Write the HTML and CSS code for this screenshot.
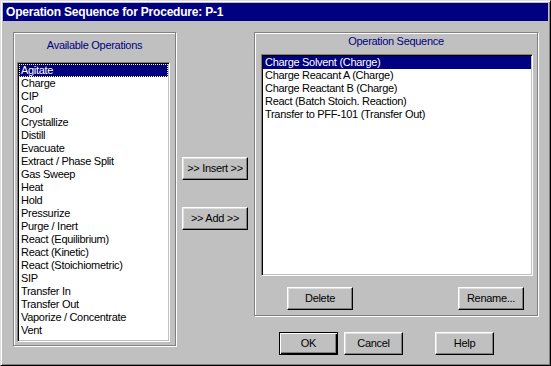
FILE: index.html
```html
<!DOCTYPE html>
<html>
<head>
<meta charset="utf-8">
<link rel="stylesheet" href="styles.css">
</head>
<body>
<div class="window">
  <div class="titlebar">Operation Sequence for Procedure: P-1</div>
  <div class="content">
    <div class="group group-left">
      <div class="group-label label-left">Available Operations</div>
      <div class="listbox list-left">
        <div class="item selected focused">Agitate</div>
        <div class="item">Charge</div>
        <div class="item">CIP</div>
        <div class="item">Cool</div>
        <div class="item">Crystallize</div>
        <div class="item">Distill</div>
        <div class="item">Evacuate</div>
        <div class="item">Extract / Phase Split</div>
        <div class="item">Gas Sweep</div>
        <div class="item">Heat</div>
        <div class="item">Hold</div>
        <div class="item">Pressurize</div>
        <div class="item">Purge / Inert</div>
        <div class="item">React (Equilibrium)</div>
        <div class="item">React (Kinetic)</div>
        <div class="item">React (Stoichiometric)</div>
        <div class="item">SIP</div>
        <div class="item">Transfer In</div>
        <div class="item">Transfer Out</div>
        <div class="item">Vaporize / Concentrate</div>
        <div class="item">Vent</div>
      </div>
    </div>
    <div class="mid">
      <button class="btn btn-mid btn-insert">&gt;&gt; Insert &gt;&gt;</button>
      <button class="btn btn-mid btn-add">&gt;&gt; Add &gt;&gt;</button>
    </div>
    <div class="right">
      <div class="group group-right">
        <div class="group-label label-right">Operation Sequence</div>
        <div class="listbox list-right">
          <div class="item selected">Charge Solvent (Charge)</div>
          <div class="item">Charge Reacant A (Charge)</div>
          <div class="item">Charge Reactant B (Charge)</div>
          <div class="item">React (Batch Stoich. Reaction)</div>
          <div class="item">Transfer to PFF-101 (Transfer Out)</div>
        </div>
        <div class="seq-buttons">
          <button class="btn btn-seq">Delete</button>
          <button class="btn btn-seq">Rename...</button>
        </div>
      </div>
      <div class="dialog-buttons">
        <button class="btn btn-dlg btn-default">OK</button>
        <button class="btn btn-dlg btn-cancel">Cancel</button>
        <button class="btn btn-dlg btn-help">Help</button>
      </div>
    </div>
  </div>
</div>
</body>
</html>
```
FILE: styles.css
```css
html, body {
  margin: 0;
  padding: 0;
  background: #c0c0c0;
}
body {
  font-family: "Liberation Sans", Arial, sans-serif;
  font-size: 11px;
  letter-spacing: -0.3px;
  color: #000;
}
.window {
  box-sizing: border-box;
  width: 551px;
  height: 366px;
  background: #c0c0c0;
  border: 1px solid;
  border-color: #dfdfdf #000 #000 #dfdfdf;
  box-shadow: inset 1px 1px 0 #fff, inset -1px -1px 0 #808080;
  padding: 2px;
  display: flex;
  flex-direction: column;
}
.titlebar {
  height: 18px;
  line-height: 18px;
  background: #000080;
  color: #fff;
  font-weight: bold;
  font-size: 12px;
  letter-spacing: -0.2px;
  padding-left: 3px;
  white-space: nowrap;
}
.content {
  display: flex;
  align-items: flex-start;
  padding: 11px 0 0 10px;
}
.group {
  box-sizing: border-box;
  border: 1px solid #808080;
  box-shadow: 1px 1px 0 #fff, inset 1px 1px 0 #fff;
  display: flex;
  flex-direction: column;
}
.group-label {
  color: #000080;
  text-align: center;
  line-height: 13px;
  white-space: nowrap;
}
.group-left {
  width: 163px;
  height: 314px;
}
.label-left {
  padding-top: 6px;
}
.listbox {
  box-sizing: border-box;
  background: #fff;
  border: 1px solid;
  border-color: #808080 #fff #fff #808080;
  box-shadow: inset 1px 1px 0 #000, inset -1px -1px 0 #c0c0c0;
  padding: 1px;
  overflow: hidden;
}
.list-left {
  width: 153px;
  height: 280px;
  margin: 10px 0 0 3px;
}
.item {
  box-sizing: border-box;
  height: 13px;
  line-height: 13px;
  padding-left: 2px;
  white-space: nowrap;
}
.item.selected {
  background: #000080;
  color: #fff;
}
.item.focused {
  border: 1px dotted #ffffa0;
  padding-left: 1px;
  line-height: 11px;
}
.mid {
  display: flex;
  flex-direction: column;
  width: 66px;
  margin-left: 6px;
  padding-top: 125px;
}
.btn {
  box-sizing: border-box;
  font-family: "Liberation Sans", Arial, sans-serif;
  font-size: 11px;
  letter-spacing: -0.3px;
  color: #000;
  background: #c0c0c0;
  border: 1px solid;
  border-color: #fff #000 #000 #fff;
  box-shadow: inset -1px -1px 0 #808080, inset 1px 1px 0 #dfdfdf;
  height: 23px;
  padding: 0;
  margin: 0;
  line-height: 19px;
  white-space: nowrap;
}
.btn-mid {
  width: 66px;
}
.btn-add {
  margin-top: 27px;
}
.right {
  margin-left: 6px;
  display: flex;
  flex-direction: column;
}
.group-right {
  width: 284px;
  height: 284px;
}
.label-right {
  padding: 2px 0 6px;
}
.list-right {
  width: 272px;
  height: 222px;
  margin-left: 6px;
}
.seq-buttons {
  display: flex;
  justify-content: space-between;
  padding: 11px 13px 0 32px;
}
.btn-seq {
  width: 66px;
}
.dialog-buttons {
  display: flex;
  margin-top: 16px;
  padding-left: 25px;
}
.btn-dlg {
  width: 59px;
}
.btn-default {
  border: 1px solid #000;
  box-shadow: inset 1px 1px 0 #fff, inset -1px -1px 0 #000, inset -2px -2px 0 #808080;
}
.btn-cancel {
  margin-left: 6px;
}
.btn-help {
  margin-left: 32px;
}
```
